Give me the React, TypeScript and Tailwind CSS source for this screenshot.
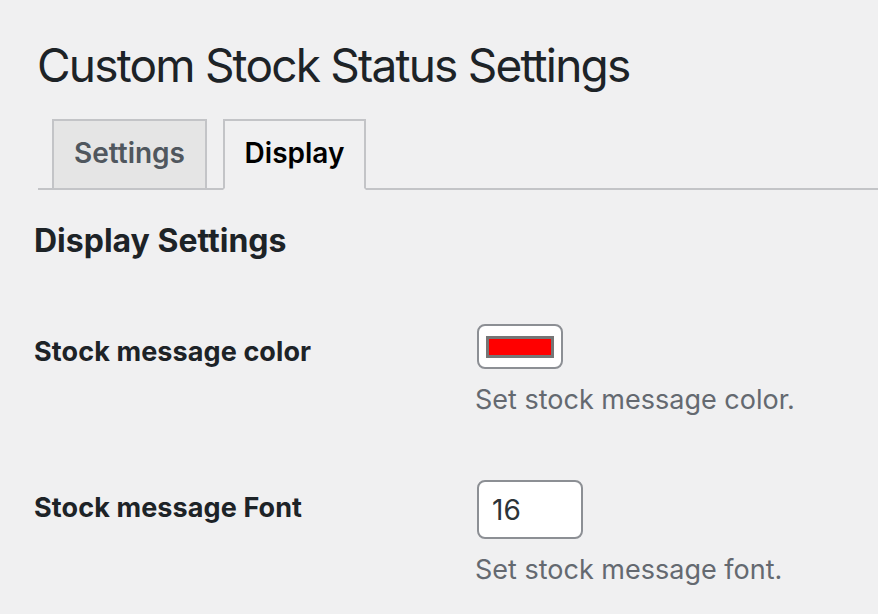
import React from 'react';

const font = { fontFamily: 'Inter, "Noto Sans", sans-serif' };

interface RowProps {
  label: string;
  description: string;
  children: React.ReactNode;
}

function SettingRow({ label, description, children }: RowProps) {
  return (
    <div className="flex">
      <div className="w-[443px] shrink-0 pt-[10px] text-[27px] leading-[36px] font-bold tracking-[0.1px] text-[#1d2327]">
        {label}
      </div>
      <div className="flex flex-col items-start">
        {children}
        <p className="mt-[13px] -ml-[2px] text-[27px] leading-[36px] text-[#646970]">{description}</p>
      </div>
    </div>
  );
}

export default function App() {
  return (
    <div className="min-h-[614px] w-full overflow-hidden bg-[#f0f0f1] text-[#1d2327]" style={font}>
      <div className="pl-[34px] pt-[35px]">
        {/* Page title */}
        <h1 className="ml-[3px] text-[46px] leading-[60px] font-normal tracking-[-1.8px]">Custom Stock Status Settings</h1>

        {/* Tabs */}
        <div className="mt-[24px] ml-[4px] flex items-end border-b-2 border-[#c3c4c7] pl-[14px]">
          <div className="flex w-[155px] justify-center border-2 border-b-0 border-[#c3c4c7] bg-[#e5e5e5] pt-[8px] pb-[11px] text-[28px] leading-[48px] font-semibold text-[#50575e]">
            Settings
          </div>
          <div className="-mb-[2px] ml-[16px] flex w-[143px] justify-center border-2 border-b-2 border-[#c3c4c7] border-b-[#f0f0f1] bg-[#f0f0f1] pt-[8px] pb-[11px] text-[28px] leading-[48px] font-semibold text-black">
            Display
          </div>
        </div>

        {/* Section */}
        <h2 className="mt-[31px] text-[32px] leading-[40px] font-bold">Display Settings</h2>

        <div className="mt-[63px]">
          <SettingRow label="Stock message color" description="Set stock message color.">
            <div className="flex h-[45px] w-[86px] items-center justify-center rounded-lg border-2 border-[#8c8f94] bg-white">
              <div className="h-[22px] w-[68px] border-[3px] border-[#767676] bg-[#ff0000]" />
            </div>
          </SettingRow>
        </div>

        <div className="mt-[62px]">
          <SettingRow label="Stock message Font" description="Set stock message font.">
            <div className="flex h-[59px] w-[106px] items-center rounded-lg border-2 border-[#8c8f94] bg-white pl-[13px] text-[28px] text-[#2c3338]">
              16
            </div>
          </SettingRow>
        </div>
      </div>
    </div>
  );
}
